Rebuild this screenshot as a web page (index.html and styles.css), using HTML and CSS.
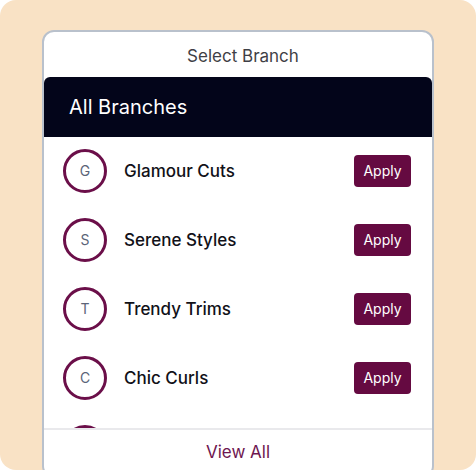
FILE: index.html
```html
<!DOCTYPE html>
<html>
<head>
<meta charset="utf-8">
<link rel="stylesheet" href="styles.css">
</head>
<body>
<div class="stage">
  <div class="card">
    <div class="title">Select Branch</div>
    <div class="header">All Branches</div>
    <div class="list">
      <div class="row">
        <div class="avatar">G</div>
        <div class="name">Glamour Cuts</div>
        <button class="apply">Apply</button>
      </div>
      <div class="row">
        <div class="avatar">S</div>
        <div class="name">Serene Styles</div>
        <button class="apply">Apply</button>
      </div>
      <div class="row">
        <div class="avatar">T</div>
        <div class="name">Trendy Trims</div>
        <button class="apply">Apply</button>
      </div>
      <div class="row">
        <div class="avatar">C</div>
        <div class="name">Chic Curls</div>
        <button class="apply">Apply</button>
      </div>
      <div class="row">
        <div class="avatar"></div>
      </div>
    </div>
    <div class="footer">View All</div>
  </div>
</div>
</body>
</html>
```

FILE: styles.css
```css
* { box-sizing: border-box; }
html, body { margin: 0; padding: 0; background: #ffffff; }
body { font-family: Inter, "Noto Sans", sans-serif; }
.stage {
  width: 476px;
  height: 470px;
  background: #f9e2c5;
  border-radius: 16px;
  overflow: hidden;
  padding: 30px 42px 0 42px;
}
.card {
  background: #ffffff;
  border: 2px solid #b9c1cc;
  border-radius: 12px;
}
.title {
  height: 45px;
  display: flex;
  align-items: center;
  justify-content: center;
  font-size: 17px;
  color: #3f3f46;
  padding-top: 3px;
  padding-left: 10px;
}
.header {
  height: 60px;
  background: #03051a;
  border-radius: 6px 6px 0 0;
  color: #ffffff;
  font-size: 20px;
  display: flex;
  align-items: center;
  padding-left: 25px;
  padding-bottom: 0;
}
.list {
  height: 291px;
  overflow: hidden;
}
.row {
  height: 69px;
  display: flex;
  align-items: center;
  padding: 0 21px 2px 19px;
}
.avatar {
  width: 44px;
  height: 44px;
  border: 3px solid #6b0f49;
  border-radius: 50%;
  display: flex;
  align-items: center;
  justify-content: center;
  font-size: 14px;
  color: #5b6478;
  flex: none;
}
.name {
  margin-left: 17px;
  font-size: 17px;
  font-weight: 500;
  color: #111118;
  flex: 1;
}
.apply {
  width: 57px;
  height: 32px;
  border: none;
  border-radius: 4px;
  background: #650a41;
  color: #ffffff;
  font-family: Inter, "Noto Sans", sans-serif;
  font-size: 14px;
  padding: 0;
}
.footer {
  border-top: 2px solid #e9e9ec;
  height: 48px;
  display: flex;
  justify-content: center;
  padding-top: 12px;
  font-size: 17px;
  color: #6e1650;
}
```
